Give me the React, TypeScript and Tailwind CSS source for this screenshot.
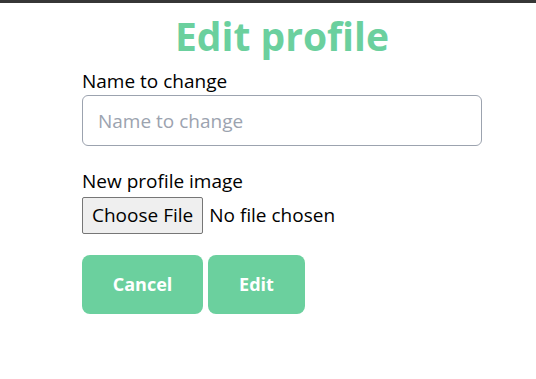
import React from "react";

export default function App() {
  return (
    <div className="min-h-screen bg-white" style={{ fontFamily: '"Open Sans", "Noto Sans", sans-serif' }}>
      <div className="h-[3px] bg-[#363636]" />
      <div className="ml-[82px] w-[400px] flex flex-col">
        <h1 className="text-center text-[39px] font-bold leading-[48px] text-[#6bd09e] mt-[9px]">Edit profile</h1>
        <label className="mt-[9px] text-[19px] leading-[25px] text-black">Name to change</label>
        <input
          type="text"
          placeholder="Name to change"
          className="mt-[1px] h-[51px] w-[400px] rounded-[6px] border border-[#9ca3af] px-[15px] text-[19px] text-black placeholder:text-[#9ca3af] outline-none"
        />
        <label className="mt-[23px] text-[19px] leading-[25px] text-black">New profile image</label>
        <input
          type="file"
          className="mt-[3px] text-[19px] text-black file:mr-[6px] file:h-[37px] file:rounded-[2px] file:border file:border-solid file:border-[#767676] file:bg-[#efefef] file:px-[9px] file:text-[19px] file:text-black"
        />
        <div className="mt-[21px] flex gap-[5px]">
          <button className="h-[59px] w-[121px] rounded-[8px] bg-[#6bd09e] text-[18px] font-bold text-white">Cancel</button>
          <button className="h-[59px] w-[97px] rounded-[8px] bg-[#6bd09e] text-[18px] font-bold text-white">Edit</button>
        </div>
      </div>
    </div>
  );
}
